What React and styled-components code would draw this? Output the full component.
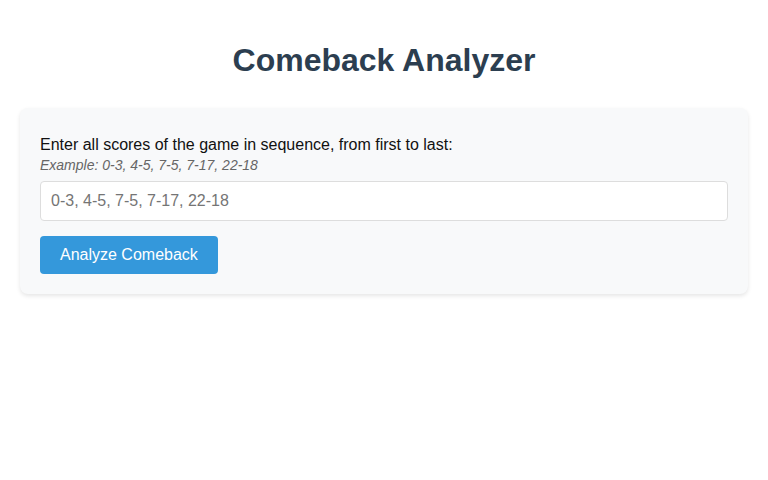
import React, { useState } from "react";
import styled, { createGlobalStyle } from "styled-components";

const GlobalStyle = createGlobalStyle`
  body {
    margin: 0;
    background: #ffffff;
    font-family: "Liberation Sans", Arial, sans-serif;
  }
`;

const Container = styled.div`
  max-width: 800px;
  margin: 0 auto;
  padding: 42px 20px 20px;
`;

const Title = styled.h1`
  margin: 0 0 29px;
  text-align: center;
  font-size: 32px;
  font-weight: bold;
  color: #2c3e50;
`;

const Card = styled.div`
  background: #f8f9fa;
  border-radius: 8px;
  box-shadow: 0 2px 4px rgba(0, 0, 0, 0.1);
  padding: 28px 20px 20px;
`;

const Label = styled.label`
  display: block;
  font-size: 16px;
  color: #111;
  margin-bottom: 3px;
`;

const Example = styled.div`
  font-size: 14px;
  font-style: italic;
  color: #666;
  margin-bottom: 8px;
`;

const ScoreInput = styled.input`
  display: block;
  width: 100%;
  box-sizing: border-box;
  height: 40px;
  padding: 10px;
  border: 1px solid #ddd;
  border-radius: 4px;
  background: #fff;
  font-family: inherit;
  font-size: 16px;
  color: #333;
  margin-bottom: 15px;

  &::placeholder {
    color: #757575;
  }
`;

const Button = styled.button`
  background: #3498db;
  color: #fff;
  border: none;
  border-radius: 4px;
  padding: 10px 20px;
  font-family: inherit;
  font-size: 16px;
  line-height: 18px;
  cursor: pointer;
`;

const App = () => {
  const [scores, setScores] = useState("");

  return (
    <>
      <GlobalStyle />
      <Container>
        <Title>Comeback Analyzer</Title>
        <Card>
          <Label htmlFor="scores">
            Enter all scores of the game in sequence, from first to last:
          </Label>
          <Example>Example: 0-3, 4-5, 7-5, 7-17, 22-18</Example>
          <ScoreInput
            id="scores"
            value={scores}
            onChange={(e) => setScores(e.target.value)}
            placeholder="0-3, 4-5, 7-5, 7-17, 22-18"
          />
          <Button>Analyze Comeback</Button>
        </Card>
      </Container>
    </>
  );
};

export default App;
